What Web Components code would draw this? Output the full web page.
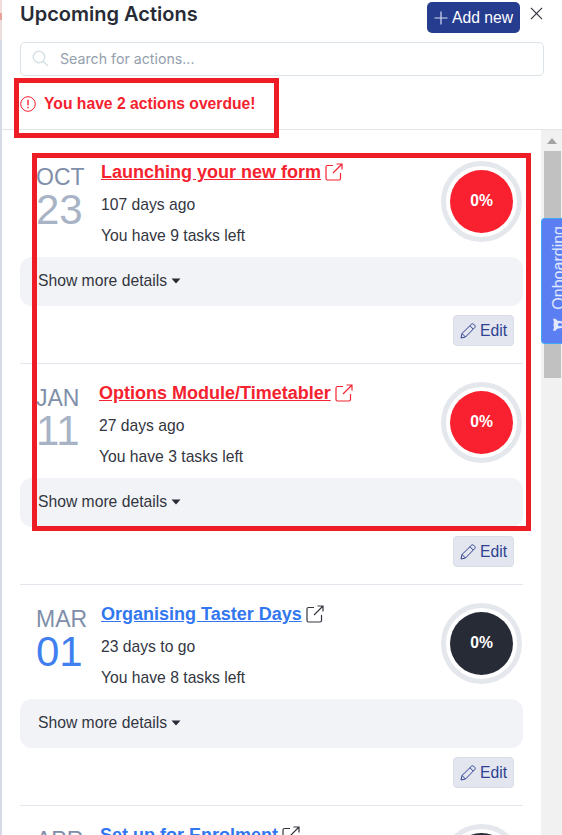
<!DOCTYPE html>
<html>
<head>
<meta charset="utf-8">
<title>Upcoming Actions</title>
<style>
  html, body { margin: 0; height: 100%; overflow: hidden; background: #fff; }
  body { font-family: "Liberation Sans", Arial, sans-serif; }
</style>
</head>
<body>
<actions-panel>
  <action-item month="OCT" day="23" title="Launching your new form" when="107 days ago" tasks="9" state="overdue" col="65"></action-item>
  <action-item month="JAN" day="11" title="Options Module/Timetabler" when="27 days ago" tasks="3" state="overdue" col="63"></action-item>
  <action-item month="MAR" day="01" title="Organising Taster Days" when="23 days to go" tasks="8" col="65"></action-item>
  <action-item month="APR" day="12" title="Set up for Enrolment" when="40 days to go" tasks="5" col="64"></action-item>
</actions-panel>

<script>
const panelTpl = document.createElement("template");
panelTpl.innerHTML = `
<style>
  :host {
    display: flex;
    flex-direction: column;
    position: relative;
    width: 562px;
    height: 835px;
    overflow: hidden;
    box-sizing: border-box;
    padding-left: 2px;
    color: #272b36;
  }
  .edge {
    position: absolute;
    left: 0; top: 0; bottom: 0;
    width: 2px;
    background: linear-gradient(#f0dcd8 0 13px, #e9a39b 13px 20px, #ecdede 20px 40px, #d6d9e6 40px);
  }
  header {
    flex: none;
    height: 130px;
    box-sizing: border-box;
    border-bottom: 1px solid #e2e5e9;
    padding: 0 18px;
    display: flex;
    flex-direction: column;
  }
  .top {
    display: flex;
    align-items: flex-start;
    height: 42px;
  }
  h1 {
    margin: 2px 0 0;
    font: 600 20px/24px Inter, sans-serif;
    color: #272b36;
    flex: 1;
  }
  .add {
    margin-top: 2px;
    height: 31px;
    width: 93px;
    box-sizing: border-box;
    background: #263c8f;
    border-radius: 5px;
    color: #fff;
    font-size: 15.7px;
    display: flex;
    align-items: center;
    justify-content: center;
    gap: 4px;
  }
  .close { margin: 7px 1px 0 10px; width: 13px; height: 13px; }
  .search {
    height: 34px;
    box-sizing: border-box;
    border: 1px solid #dbe3e8;
    border-radius: 5px;
    display: flex;
    align-items: center;
    padding: 0 0 2px 11px;
    gap: 11px;
    font: 400 14.2px Inter, sans-serif;
    color: #94a0ad;
  }
  .overdue {
    margin: 20px 0 0 0;
    display: flex;
    align-items: center;
    gap: 8px;
    color: #f5222f;
    font-weight: 700;
    font-size: 15.7px;
    line-height: 16px;
  }
  .body { flex: 1; display: flex; min-height: 0; }
  .list {
    flex: 1;
    min-width: 0;
    overflow: hidden;
    padding: 13px 18px 0;
  }
  .scrollbar {
    flex: none;
    width: 21px;
    background: #f1f1f1;
    display: flex;
    flex-direction: column;
    align-items: center;
    padding-left: 1px;
    box-sizing: border-box;
  }
  .arrow { height: 21px; display: flex; align-items: center; }
  .thumb { width: 17px; height: 227px; background: #c1c1c1; }
  .tab {
    position: absolute;
    right: 0;
    top: 218px;
    width: 21px;
    height: 126px;
    box-sizing: border-box;
    background: #5b7ff2;
    border: 1px solid #3fa9f5;
    border-right: none;
    border-radius: 4px 0 0 4px;
    color: #e3e9ff;
    font-size: 16px;
    overflow: hidden;
  }
  .tab div {
    position: absolute;
    left: 8px;
    bottom: 11px;
    display: flex;
    align-items: center;
    gap: 8px;
    writing-mode: vertical-rl;
    transform: rotate(180deg);
    white-space: nowrap;
  }
  .mark {
    position: absolute;
    box-sizing: border-box;
    border: 5px solid #ee1c25;
    pointer-events: none;
  }
</style>
<div class="edge"></div>
<header>
  <div class="top">
    <h1>Upcoming Actions</h1>
    <div class="add">
      <svg width="14" height="14" viewBox="0 0 14 14" stroke="#d5daf0" stroke-width="1.2"><path d="M7 0.5V13.5M0.5 7H13.5"/></svg>
      <span>Add new</span>
    </div>
    <svg class="close" viewBox="0 0 14 14" stroke="#33363f" stroke-width="1.3"><path d="M1 1L13 13M13 1L1 13"/></svg>
  </div>
  <div class="search">
    <svg width="17" height="17" viewBox="0 0 17 17" fill="none" stroke="#d4e0e6" stroke-width="1.4"><circle cx="7" cy="7" r="5.8"/><path d="M11.2 11.2L16 16"/></svg>
    <span>Search for actions...</span>
  </div>
  <div class="overdue">
    <svg width="16" height="16" viewBox="0 0 16 16" fill="none" stroke="#f5222f" stroke-width="1"><circle cx="8" cy="8" r="7.3"/><path d="M8 3.8V9.2" stroke-width="1.4"/><path d="M8 10.8V12.2" stroke-width="1.4"/></svg>
    <span>You have 2 actions overdue!</span>
  </div>
</header>
<div class="body">
  <div class="list"><slot></slot></div>
  <div class="scrollbar">
    <div class="arrow"><svg width="10" height="6" viewBox="0 0 10 6" fill="#a3a3a3"><path d="M5 0L10 6H0Z"/></svg></div>
    <div class="thumb"></div>
  </div>
</div>
<div class="tab">
  <div>
    <svg width="15" height="14" viewBox="0 0 15 14" fill="#e3e9ff"><path d="M0.5 7C2.5 4 5.5 3 8.5 3.2L10.5 1H13L12 4.5C12.6 5.4 12.6 8.6 12 9.5L13 13H10.5L8.5 10.8C5.5 11 2.5 10 0.5 7ZM6 5.7A1.4 1.4 0 1 0 6 8.3A1.4 1.4 0 1 0 6 5.7Z" fill-rule="evenodd"/></svg>
    <span>Onboarding</span>
  </div>
</div>
<div class="mark" style="left:14px;top:78px;width:265px;height:60px"></div>
<div class="mark" style="left:32px;top:153px;width:499px;height:378px"></div>
`;

class ActionsPanel extends HTMLElement {
  constructor() {
    super();
    this.attachShadow({ mode: "open" });
    this.shadowRoot.appendChild(panelTpl.content.cloneNode(true));
  }
}

const itemTpl = document.createElement("template");
itemTpl.innerHTML = `
<style>
  :host {
    display: block;
    height: 221px;
    box-sizing: border-box;
    border-bottom: 1px solid #e4e6ee;
    padding-top: 19px;
    color: #33363f;
    font-size: 15.7px;
  }
  .main { display: flex; height: 95px; padding-left: 16px; }
  .date {
    flex: none;
    display: flex;
    flex-direction: column;
    align-items: flex-start;
    margin-top: 1px;
    color: #7f8fa9;
  }
  .month { font-size: 23px; line-height: 28px; }
  .day { font-size: 42px; line-height: 38px; color: #a8b4c6; }
  .info { flex: 1; min-width: 0; }
  .title {
    display: flex;
    align-items: flex-start;
    gap: 4px;
    height: 34px;
    font-size: 18px;
    line-height: 20px;
    font-weight: 700;
    color: #f5222f;
  }
  .title span { text-decoration: underline; }
  .title svg { stroke: currentColor; margin-top: 1px; }
  .line { line-height: 18px; height: 31px; }
  .ring {
    flex: none;
    width: 81px;
    height: 81px;
    margin: -1px 1px 0 0;
    box-sizing: border-box;
    border: 5px solid #e4e7ec;
    border-radius: 50%;
    padding: 4px;
  }
  .ring div {
    height: 100%;
    box-sizing: border-box;
    padding-bottom: 2px;
    border-radius: 50%;
    background: #f9202f;
    color: #fff;
    font-weight: 700;
    font-size: 15.7px;
    display: flex;
    align-items: center;
    justify-content: center;
  }
  .more {
    height: 49px;
    box-sizing: border-box;
    padding: 0 0 2px 18px;
    background: #f2f3f7;
    border-radius: 12px;
    display: flex;
    align-items: center;
    gap: 4px;
  }
  .foot { display: flex; justify-content: flex-end; padding: 9px 9px 0 0; }
  .edit {
    width: 61px;
    height: 31px;
    box-sizing: border-box;
    background: #e3e6ef;
    border: 1px solid #d8dde8;
    border-radius: 4px;
    color: #2f4291;
    display: flex;
    align-items: center;
    justify-content: center;
    gap: 4px;
  }
  :host(:not([state="overdue"])) .title { color: #3277ef; }
  :host(:not([state="overdue"])) .title svg { stroke: #33363f; }
  :host(:not([state="overdue"])) .day { color: #3f7ff0; }
  :host(:not([state="overdue"])) .ring div { background: #272b36; }
</style>
<div class="main">
  <div class="col">
    <div class="date">
      <div class="month"></div>
      <div class="day"></div>
    </div>
  </div>
  <div class="info">
    <div class="title">
      <span class="name"></span>
      <svg width="18" height="18" viewBox="0 0 18 18" fill="none" stroke-width="1.2"><path d="M8 2.5H2.5Q1 2.5 1 4V15.5Q1 17 2.5 17H14Q15.5 17 15.5 15.5V10"/><path d="M8 10L17 1M11.5 1H17V6.5"/></svg>
    </div>
    <div class="line when"></div>
    <div class="line tasks"></div>
  </div>
  <div class="ring"><div>0%</div></div>
</div>
<div class="more">
  <span>Show more details</span>
  <svg width="10" height="6" viewBox="0 0 10 6" fill="#272b36"><path d="M0.5 0.5H9.5L5 5.5Z"/></svg>
</div>
<div class="foot">
  <div class="edit">
    <svg width="16" height="16" viewBox="0 0 16 16" fill="none" stroke="#2f4291" stroke-width="1"><path d="M1 15L2 10.5L11.5 1.2Q12.5 0.4 13.6 1.2L14.8 2.4Q15.6 3.5 14.8 4.5L5.5 14Z"/><path d="M2 10.5L5.5 14M10 2.8L13.2 6"/></svg>
    <span>Edit</span>
  </div>
</div>
`;

class ActionItem extends HTMLElement {
  constructor() {
    super();
    this.attachShadow({ mode: "open" });
    this.shadowRoot.appendChild(itemTpl.content.cloneNode(true));
  }

  connectedCallback() {
    const root = this.shadowRoot;
    root.querySelector(".month").textContent = this.getAttribute("month");
    root.querySelector(".day").textContent = this.getAttribute("day");
    root.querySelector(".name").textContent = this.getAttribute("title");
    root.querySelector(".when").textContent = this.getAttribute("when");
    root.querySelector(".tasks").textContent = "You have " + this.getAttribute("tasks") + " tasks left";
    root.querySelector(".col").style.width = this.getAttribute("col") + "px";
  }
}

customElements.define("actions-panel", ActionsPanel);
customElements.define("action-item", ActionItem);
</script>
</body>
</html>
